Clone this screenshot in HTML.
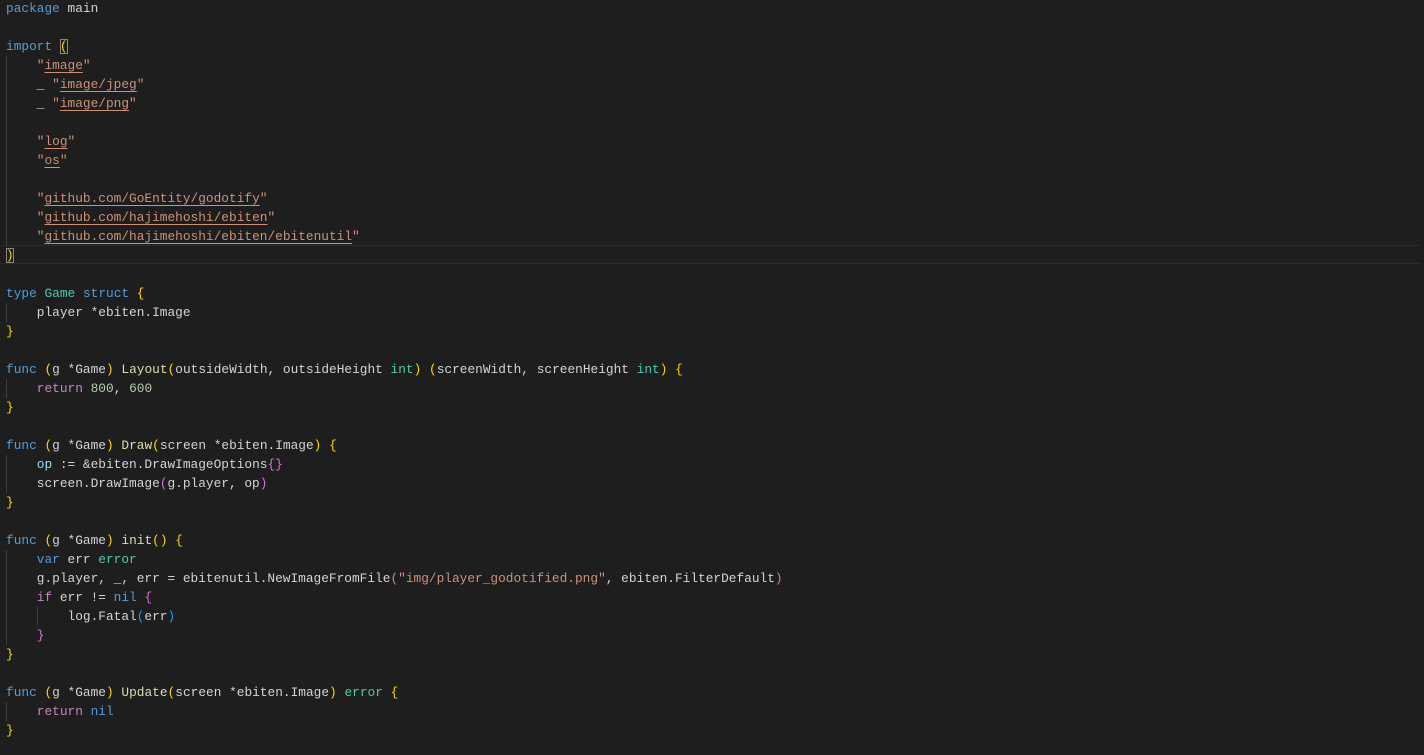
<!DOCTYPE html>
<html><head><meta charset="utf-8"><style>
html,body{margin:0;padding:0;background:#1e1e1e;width:1424px;height:755px;overflow:hidden}
.ed{position:absolute;left:6px;top:-1px;font-family:"Liberation Mono",monospace;font-size:12.82px;line-height:19px;color:#d4d4d4;white-space:pre;margin:0}
.k{color:#569cd6}.c{color:#c586c0}.s{color:#ce9178}.u{text-decoration:underline;text-underline-offset:3px}
.t{color:#4ec9b0}.f{color:#dcdcaa}.v{color:#9cdcfe}.n{color:#b5cea8}
.b1{color:#ffd700}.b2{color:#da70d6}.b3{color:#179fff}
.box{outline:1px solid #888;outline-offset:-1px}
.g{position:absolute;width:1px;background:#404040}
.cur{position:absolute;left:0;top:245px;width:1420px;height:19px;border-top:1px solid #2c2c2c;border-bottom:1px solid #2c2c2c;box-sizing:border-box}
</style></head><body>
<div class="cur"></div>
<div class="g" style="left:6px;top:56px;height:190px"></div>
<div class="g" style="left:6px;top:303px;height:19px"></div>
<div class="g" style="left:6px;top:379px;height:19px"></div>
<div class="g" style="left:6px;top:455px;height:38px"></div>
<div class="g" style="left:6px;top:550px;height:95px"></div>
<div class="g" style="left:37px;top:607px;height:19px"></div>
<div class="g" style="left:6px;top:702px;height:19px"></div>
<pre class="ed"><span class="k">package</span> main

<span class="k">import</span> <span class="b1 box">(</span>
    <span class="s">"<span class="u">image</span>"</span>
    _ <span class="s">"<span class="u">image/jpeg</span>"</span>
    _ <span class="s">"<span class="u">image/png</span>"</span>

    <span class="s">"<span class="u">log</span>"</span>
    <span class="s">"<span class="u">os</span>"</span>

    <span class="s">"<span class="u">github.com/GoEntity/godotify</span>"</span>
    <span class="s">"<span class="u">github.com/hajimehoshi/ebiten</span>"</span>
    <span class="s">"<span class="u">github.com/hajimehoshi/ebiten/ebitenutil</span>"</span>
<span class="b1 box">)</span>

<span class="k">type</span> <span class="t">Game</span> <span class="k">struct</span> <span class="b1">{</span>
    player *ebiten.Image
<span class="b1">}</span>

<span class="k">func</span> <span class="b1">(</span>g *Game<span class="b1">)</span> <span class="f">Layout</span><span class="b1">(</span>outsideWidth, outsideHeight <span class="t">int</span><span class="b1">)</span> <span class="b1">(</span>screenWidth, screenHeight <span class="t">int</span><span class="b1">)</span> <span class="b1">{</span>
    <span class="c">return</span> <span class="n">800</span>, <span class="n">600</span>
<span class="b1">}</span>

<span class="k">func</span> <span class="b1">(</span>g *Game<span class="b1">)</span> <span class="f">Draw</span><span class="b1">(</span>screen *ebiten.Image<span class="b1">)</span> <span class="b1">{</span>
    <span class="v">op</span> := &amp;ebiten.DrawImageOptions<span class="b2">{}</span>
    screen.DrawImage<span class="b2">(</span>g.player, op<span class="b2">)</span>
<span class="b1">}</span>

<span class="k">func</span> <span class="b1">(</span>g *Game<span class="b1">)</span> <span class="f">init</span><span class="b1">()</span> <span class="b1">{</span>
    <span class="k">var</span> err <span class="t">error</span>
    g.player, _, err = ebitenutil.NewImageFromFile<span class="b2">(</span><span class="s">"img/player_godotified.png"</span>, ebiten.FilterDefault<span class="b2">)</span>
    <span class="c">if</span> err != <span class="k">nil</span> <span class="b2">{</span>
        log.Fatal<span class="b3">(</span>err<span class="b3">)</span>
    <span class="b2">}</span>
<span class="b1">}</span>

<span class="k">func</span> <span class="b1">(</span>g *Game<span class="b1">)</span> <span class="f">Update</span><span class="b1">(</span>screen *ebiten.Image<span class="b1">)</span> <span class="t">error</span> <span class="b1">{</span>
    <span class="c">return</span> <span class="k">nil</span>
<span class="b1">}</span>
</pre>
</body></html>
